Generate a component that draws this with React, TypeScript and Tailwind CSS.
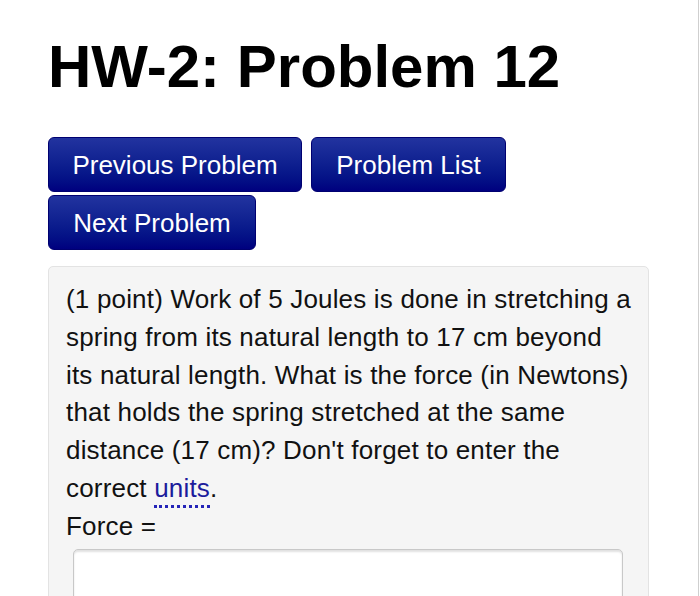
import React from 'react';

const buttonClass =
  'flex items-center justify-center whitespace-nowrap rounded-[6px] border border-[#000070] bg-gradient-to-b from-[#22339f] to-[#00007f] h-[55px] text-[26px] text-white leading-none';

export default function App() {
  return (
    <div
      className="w-[700px] h-[596px] overflow-hidden bg-white"
      style={{ fontFamily: '"Liberation Sans", Arial, sans-serif' }}
    >
      <div className="h-full w-[699px] border-r border-[#cfcfcf] pl-12 pt-[37px]">
        <h1 className="text-[60px] font-bold leading-[60px] text-black">HW-2: Problem 12</h1>

        <div className="mt-10 flex flex-col gap-[3px]">
          <div className="flex gap-[9px]">
            <button className={`${buttonClass} w-[254px]`}>Previous Problem</button>
            <button className={`${buttonClass} w-[195px]`}>Problem List</button>
          </div>
          <div className="flex">
            <button className={`${buttonClass} w-[208px]`}>Next Problem</button>
          </div>
        </div>

        <div className="mt-4 w-[601px] h-[400px] rounded-[5px] border border-[#e3e3e3] bg-[#f5f5f5] pl-[17px] pr-2 pt-[14px] text-[26px] leading-[37.8px] tracking-[0.18px] text-[#111]">
          <p className="whitespace-nowrap">
            (1 point) Work of 5 Joules is done in stretching a<br />
            spring from its natural length to 17 cm beyond<br />
            its natural length. What is the force (in Newtons)<br />
            that holds the spring stretched at the same<br />
            distance (17 cm)? Don't forget to enter the<br />
            correct{' '}
            <span className="text-[#1c1c9c] border-b-[3px] border-dotted border-[#2424b8] leading-[28px] pb-[3px] inline-block">
              units
            </span>
            .
          </p>
          <p>Force =</p>
          <div className="mt-[3px] ml-[7px] w-[550px] h-[80px] rounded-[5px] border border-[#c8c8c8] bg-white shadow-[inset_0_2px_2px_rgba(0,0,0,0.12)]" />
        </div>
      </div>
    </div>
  );
}
